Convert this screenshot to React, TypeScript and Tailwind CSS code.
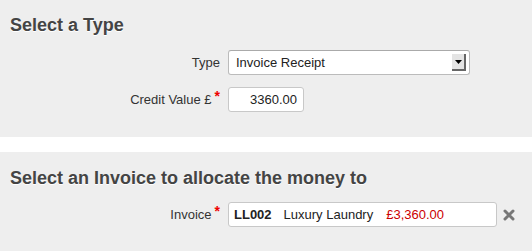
import React from "react";

function Star() {
  return <span className="text-[#e00] text-[14px] font-bold ml-[3px] relative top-[-3px]">*</span>;
}

export default function App() {
  return (
    <div className="w-[532px] h-[251px] bg-[#eeeeee] font-['Liberation_Sans',Arial,sans-serif] text-[#333] overflow-hidden">
      <section className="h-[137px] pt-[14px] px-[10px]">
        <h2 className="text-[18px] leading-[22px] font-bold text-[#444] [text-shadow:0_1px_0_#fff]">Select a Type</h2>
        <div className="mt-[14px] grid grid-cols-[210px_auto] gap-x-2 gap-y-[12px] items-center">
          <div className="text-right text-[13px]">Type</div>
          <div className="w-[242px] h-[25px] bg-white border border-[#bbb] border-t-[#aaa] rounded-[3px] flex items-center pl-[7px] pr-[3px] text-[13px] text-[#222]">
            <span className="flex-1">Invoice Receipt</span>
            <span className="w-[14px] h-[17px] bg-[#e4e4e4] border-r-2 border-b-2 border-[#666] flex items-center justify-center">
              <svg width="7" height="4" viewBox="0 0 7 4"><path d="M0 0h7L3.5 4z" fill="#000" /></svg>
            </span>
          </div>
          <div className="text-right text-[13px] whitespace-nowrap">
            Credit Value £<Star />
          </div>
          <div className="w-[76px] h-[25px] bg-white border border-[#c8c8c8] rounded-[3px] flex items-center justify-end pr-[6px] text-[13px] text-[#222]">
            3360.00
          </div>
        </div>
      </section>
      <div className="h-[15px] bg-white" />
      <section className="pt-[15px] px-[10px]">
        <h2 className="text-[18px] leading-[22px] font-bold text-[#444] [text-shadow:0_1px_0_#fff]">Select an Invoice to allocate the money to</h2>
        <div className="mt-[13px] grid grid-cols-[210px_auto] gap-x-2 items-center">
          <div className="text-right text-[13px]">
            Invoice<Star />
          </div>
          <div className="flex items-center gap-[6px]">
            <div className="w-[269px] h-[25px] bg-white border border-[#c8c8c8] rounded-[3px] flex items-center pl-[5px] text-[13px] text-[#222]">
              <span className="font-bold">LL002</span>
              <span className="ml-[12px]">Luxury Laundry</span>
              <span className="ml-[13px] text-[#c00]">£3,360.00</span>
            </div>
            <svg width="12" height="12" viewBox="0 0 12 12">
              <path d="M2 2L10 10M10 2L2 10" stroke="#777" strokeWidth="3" strokeLinecap="round" />
            </svg>
          </div>
        </div>
      </section>
    </div>
  );
}
